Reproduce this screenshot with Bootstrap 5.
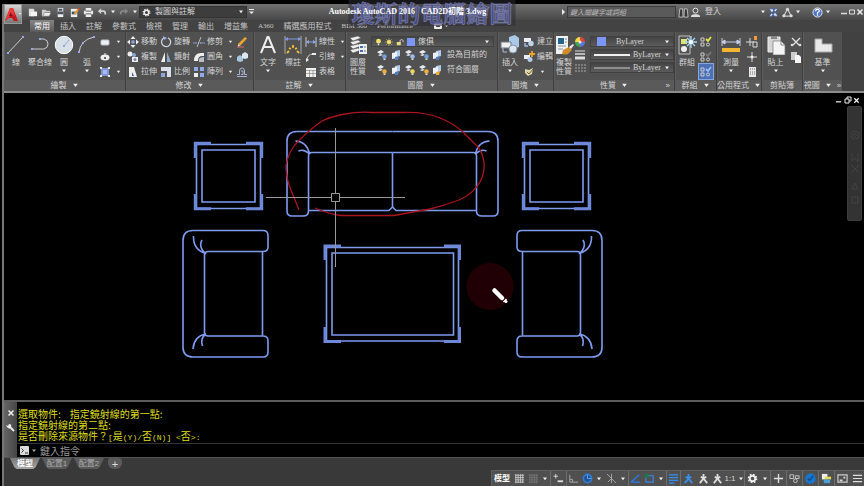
<!DOCTYPE html>
<html lang="zh-Hant">
<head>
<meta charset="utf-8">
<meta name="viewport" content="width=device-width, initial-scale=1">
<title>Autodesk AutoCAD 2016</title>
<link href="https://cdn.jsdelivr.net/npm/bootstrap@5.3.0/dist/css/bootstrap.min.css" rel="stylesheet">
<style>
body{background:#000;color:#d4d4d4;font:8px/10px "Liberation Sans","Noto Sans CJK TC",sans-serif;min-height:100vh;overflow:hidden}
svg{display:block;flex:none}
button,select,input{font:inherit;color:inherit}
.tool{background:none;border:0;padding:0;color:inherit;display:flex;align-items:center;white-space:nowrap;line-height:10px}
.shell{border-left:2px solid #777;margin:4px 0 0 2px;flex:1}
.topbar{display:grid;grid-template-columns:18px 1fr;background:linear-gradient(#707070,#484848 16px,#434343 16px,#434343)}
.appkey{background:linear-gradient(#d6d6d6,#777);height:20px;justify-content:center;border:1px solid #999}
.titlerow{height:16px;padding-left:3px}
.qa{width:14px;height:14px;justify-content:center}
.qs{width:8px;height:14px;justify-content:center}
.login{width:76px}
.workspace{width:108px;height:12px;background:#3d3d3d;border:1px solid #333;padding:0 2px}
.pick{appearance:none;background:none;border:0;padding:0;outline:0;line-height:10px;height:10px;min-width:0}
.doc{font:bold 8px/16px "Liberation Serif","Noto Sans CJK TC",serif;color:#fff;white-space:pre;position:relative;z-index:2}
.find{width:109px;height:12px;background:#5a5a5a;border:1px solid #3c3c3c;color:#ccc;font-style:italic;padding:0 2px;font-size:7px;outline:0}
.find::placeholder{color:#bbb;opacity:1}
.tabs{height:12px;padding-left:7px}
.tabs a{padding:1px 5px;color:#c4c4c4;text-decoration:none;line-height:11px;height:12px}
.tabs a.on{background:linear-gradient(#858585,#5a5a5a);color:#fff;padding:1px 4px;margin:0 1px}
.tabs a.latin{font-size:7px}
.ribbon{display:grid;grid-template-columns:122fr 128fr 92fr 152fr 56fr 121fr 42fr 45fr 41fr 40fr 21fr;background:#515151;border-bottom:2px solid #8c8c8c}
.panel{border-right:1px solid #3f3f3f;box-shadow:inset 1px 0 #5d5d5d;min-width:0;display:flex;flex-direction:column}
.blank{background:#414141}
.tools{display:flex;height:48px;padding-top:2px}
.caption{height:11px;background:#5a5a5a;line-height:10px;display:flex;justify-content:center;align-items:center;gap:5px;position:relative}
.big{flex-direction:column;height:44px;width:24px;line-height:9px}
.big svg.pic{height:20px;width:20px;margin:1px 0 3px}
.big svg.dn{margin-top:2px}
.narrow{width:22px}.wide{width:28px}
.spaced{gap:2px}
.rows{display:flex;flex-direction:column}
.rows .tool{height:15px;gap:2px;padding-left:1px}
.rows .pic{width:12px;height:12px}
.rows .dn{margin-left:3px}
.stack{padding:2px 3px 0 1px}
.stack.props{display:flex;flex-direction:column;gap:2px;padding-left:4px}
.glyphs{gap:1px;padding-top:2px}
.combo{height:11px;background:linear-gradient(#444,#5b5b5b);border:1px solid #414141;display:flex;align-items:center;gap:3px;padding:0 3px}
.combo.roomy{gap:10px;padding-left:6px}
.latin{font-family:"Liberation Serif",serif}
.icons .tool{width:14px;height:15px;justify-content:center}
.icons .pic{width:12px;height:12px}
.held{background:#4b70b6;outline:1px solid #86a6df}
.i-blue{color:#71a0dc}.i-navy{color:#547cc0}.i-sky{color:#9bbaf0}.i-gold{color:#f1af38}.i-sun{color:#f3d55b}.i-lime{color:#e4e44c}.i-dim{color:#777}.i-pale{color:#ddd}.i-on{color:#398eee}
.drawing{background:#000;flex:1 1 0;min-height:0;position:relative}
.drawing>svg{width:100%;height:100%}
.mdi{position:absolute;top:2px;right:3px}
.mdi .tool{width:9px;height:10px;justify-content:center}
.nav3d{position:absolute;top:13px;right:2px;width:15px;height:115px;background:#333;border:1px solid #3c3c3c;border-radius:2px}
.cmd{border-top:2px solid #5d5d5d;border-bottom:1px solid #555;background:#000}
.grip{width:13px;background:linear-gradient(90deg,#666,#444);padding-top:7px;gap:6px}
.log{font:10px/11px "Noto Sans CJK TC",sans-serif;color:#dede1c;padding:6px 0 0 1px;height:41px;white-space:pre}
.log kbd{font:8px/11px "Liberation Mono",monospace;background:none;color:inherit;padding:0}
.ask{border-top:1px solid #333;height:14px;padding-left:3px;gap:3px}
.ask input{background:none;border:0;padding:0;outline:0;font:10px/12px "Noto Sans CJK TC",sans-serif;color:#999}
.ask input::placeholder{color:#999;opacity:1}
.foot{background:#393939}
.sheets{padding-left:6px;height:12px;gap:2px}
.sheets .tool{height:11px;width:30px;justify-content:center;background:#5a5a5a;color:#aaa;clip-path:polygon(0 0,100% 0,86% 82%,78% 100%,22% 100%,14% 82%)}
.sheets .tool.on{background:linear-gradient(#777,#a5a5a5);color:#fff;font-weight:bold}
.sheets .tool.more{width:14px;clip-path:none;border-radius:3px 3px 6px 6px;margin-left:2px;font-size:11px;color:#ddd}
.status{background:#505050;border:1px solid #606060;border-width:1px 0 0 1px;height:16px}
.status .tool{width:14px;height:15px;justify-content:center}
.status .cell{width:16px}.status .drop{width:10px}.status .words{width:20px;gap:2px}
.status .sep{border-left:1px solid #6c6c6c}
.status .pic{width:11px;height:11px}
.banner{position:absolute;left:50%;top:0;height:26px;transform:translateX(-50%);background:#2c2c3488;padding:0 3px;font:bold 23px/25px "Noto Serif CJK TC","Noto Sans CJK TC",serif;color:#4d55a8aa;-webkit-text-stroke:1px #a2a6d877;white-space:nowrap;pointer-events:none}
</style>
<script src="https://cdn.jsdelivr.net/npm/bootstrap@5.3.0/dist/js/bootstrap.bundle.min.js"></script>
</head>
<body class="d-flex flex-column m-0">
<svg width="0" height="0" class="position-absolute" aria-hidden="true"><defs>
<symbol id="dn" viewBox="0 0 6 4"><path d="M1 0.5h4L3 3.2z" fill="#eee"/></symbol>
<symbol id="new" viewBox="0 0 12 12"><path d="M2 2h5l1 1v7H2z" fill="#ddd"/><path d="M4 5h7v5H4z" fill="#f4f4f4"/></symbol>
<symbol id="open" viewBox="0 0 12 12"><path d="M1 3h4l1 1h4v2H5L3 10H1z" fill="#ccc"/><path d="M4 6h7l-2 4H2z" fill="#eee" stroke="#555" stroke-width=".5"/></symbol>
<symbol id="save" viewBox="0 0 12 12"><path d="M3 1h6v10H3z" fill="#eee"/><path d="M4 2h4v2H4zM3 5h6v3H3z" fill="#46525e"/></symbol>
<symbol id="saveas" viewBox="0 0 12 12"><path d="M2 2h7v9H2z" fill="#eee"/><path d="M3 5h5v3H3z" fill="#37506d"/><path d="M5 7l5-6 1.500 1.200L7 8z" fill="#ec9b28"/><path d="M9 2l1-1 1.500 1-1 1z" fill="#d33"/></symbol>
<symbol id="print" viewBox="0 0 12 12"><path d="M3 1h6v3H3zM1 4h10v4H1zM3 7h6v4H3z" fill="#eee"/><path d="M3 4.500h6M3 7.500h6" stroke="#555"/></symbol>
<symbol id="undo" viewBox="0 0 12 12"><path d="M3 5h5q2 0 2 4" fill="none" stroke="currentColor" stroke-width="2"/><path d="M1 5l4-3.500v7z" fill="currentColor"/></symbol>
<symbol id="redo" viewBox="0 0 12 12"><path d="M9 5H4q-2 0-2 4" fill="none" stroke="#888" stroke-width="2"/><path d="M11 5L7 1.500v7z" fill="#888"/></symbol>
<symbol id="gear" viewBox="0 0 12 12"><circle cx="6" cy="6" r="3" fill="none" stroke="#eee" stroke-width="2"/><circle cx="6" cy="6" r="4.500" fill="none" stroke="#eee" stroke-width="1.500" stroke-dasharray="1.800 1.734"/></symbol>
<symbol id="line" viewBox="0 0 20 20"><path d="M2 18L17 2" stroke="#ccc"/><path d="M1 17h2v2H1zM16 1h2v2h-2z" fill="#9aa7ef"/></symbol>
<symbol id="pline" viewBox="0 0 20 20"><path d="M2 14h12q4-1 4-5t-4-5h-4" fill="none" stroke="#ccc"/><path d="M1 13h2v2H1zM9 3h2v2H9z" fill="#9aa7ef"/></symbol>
<symbol id="circ" viewBox="0 0 20 20"><circle cx="10" cy="10" r="8.700" fill="#d7dfe7" stroke="#fff"/><path d="M10 11l5-6" stroke="#91a7d9"/><path d="M9 10h2v2H9z" fill="#91a7d9"/></symbol>
<symbol id="arc" viewBox="0 0 20 20"><path d="M2 18Q3 5 17 2" fill="none" stroke="#ccc"/><path d="M1 16h2v2H1zM5 7h2v2H5zM16 1h2v2h-2z" fill="#9aa7ef"/></symbol>
<symbol id="rect" viewBox="0 0 12 12"><rect x="2" y="4" width="8" height="5" rx="1" fill="#f0f0f0" stroke="#bac6d8"/></symbol>
<symbol id="ell" viewBox="0 0 12 12"><ellipse cx="6" cy="6.500" rx="4.500" ry="3" fill="#eee"/><path d="M6 6V2" stroke="#eee"/><path d="M5 6h2v2H5z" fill="#59657a"/></symbol>
<symbol id="hatch" viewBox="0 0 12 12"><rect x="2" y="2" width="8" height="8" fill="#8097d7"/><path d="M4 4h4v4H4z" fill="#a9bbee"/><path d="M1 1h2v2H1zM9 1h2v2H9zM1 9h2v2H1zM9 9h2v2H9z" fill="#eee"/></symbol>
<symbol id="move" viewBox="0 0 12 12"><path d="M6 0l2.500 3h-5zM6 12l2.500-3h-5zM0 6l3-2.500v5zM12 6L9 3.500v5z" fill="#eee"/><path d="M4.500 4.500h3v3h-3z" fill="#94abe0"/></symbol>
<symbol id="copy" viewBox="0 0 12 12"><circle cx="3" cy="3" r="2.500" fill="#eee"/><circle cx="7" cy="4" r="2" fill="#8ba6df"/><path d="M5 6h6v5H5z" fill="#eee"/><circle cx="8" cy="8.500" r="1.500" fill="#78a"/></symbol>
<symbol id="stretch" viewBox="0 0 12 12"><path d="M2 1h5l3 10H2z" fill="#eee"/><path d="M5 6l2 4H5z" fill="#345ba8"/></symbol>
<symbol id="rot" viewBox="0 0 12 12"><path d="M8 1.800A4.600 4.600 0 1 1 4 1.900" fill="none" stroke="#cdd4df" stroke-width="1.300"/><path d="M3 0l4 2-3 2z" fill="#9eb2e4"/></symbol>
<symbol id="mirror" viewBox="0 0 12 12"><path d="M5 1v10H1z" fill="#eee"/><path d="M7 1v10h4z" fill="#8daaca"/></symbol>
<symbol id="scale" viewBox="0 0 12 12"><path d="M1 1h10v10H7V5H1z" fill="#d9e0eb"/><path d="M1 7h4v4H1z" fill="#90a6da"/></symbol>
<symbol id="trim" viewBox="0 0 12 12"><path d="M0 7h4M8 7h4" stroke="#889ddd"/><path d="M4 11L8 1" stroke="#bbb"/><path d="M5 7h3" stroke="#ccc" stroke-dasharray="1 1"/></symbol>
<symbol id="fillet" viewBox="0 0 12 12"><path d="M1 10Q1 2 8 2h3v3H9Q5 5 5 10z" fill="#eee"/><path d="M6 11V8q1-2 5-2v5z" fill="#b7bec8"/></symbol>
<symbol id="array" viewBox="0 0 12 12"><path d="M1 1h4v4H1zM7 1h4v4H7zM7 7h4v4H7z" fill="#91abe6"/><path d="M1 7h4v4H1z" fill="#eee"/></symbol>
<symbol id="pencil" viewBox="0 0 12 12"><path d="M2 8l7-7 2 1.500L4 10z" fill="#e9a52f"/><path d="M2 8l2 2-2 .5z" fill="#eee"/><path d="M1 11h7" stroke="#d86a63"/></symbol>
<symbol id="cube" viewBox="0 0 12 12"><path d="M1 6l3-2 3 2v4l-3 1-3-1z" fill="#a8c5df"/><path d="M6 3l3-2 3 2v4L9 8 6 7z" fill="#dce8f4"/></symbol>
<symbol id="offset" viewBox="0 0 12 12"><path d="M1 10.500h10M1 8.500h2.500V5q0-3 2.500-3t2.500 3v3.500H11M5 8.500h2V5H5" fill="none" stroke="#a5b3d0"/></symbol>
<symbol id="text" viewBox="0 0 20 20"><path d="M3 18L9.500 2h1L17 18M5.500 12h9" fill="none" stroke="#eee" stroke-width="2"/></symbol>
<symbol id="dim" viewBox="0 0 20 20"><path d="M2 1v18M18 1v18" stroke="#aaa"/><path d="M2 4h16" stroke="#8298e0"/><path d="M2 4l3-2v4zM18 4l-3-2v4z" fill="#8298e0"/><path d="M4 18l2-2M6 13l2 1M10 10v3M14 13l-2 1M16 18l-2-2" stroke="#f4bd35" stroke-width="1.800"/></symbol>
<symbol id="linear" viewBox="0 0 12 12"><path d="M1 1v10M11 1v10" stroke="#c8c8c8"/><path d="M1 6h10" stroke="#8ca3e6"/><path d="M1 6l3-2v4zM11 6L8 4v4z" fill="#8ca3e6"/></symbol>
<symbol id="leader" viewBox="0 0 12 12"><path d="M2 10Q2 3 8 3" fill="none" stroke="#ccc"/><path d="M1 11V7l3 2zM7 2h4v2H7z" fill="#eee"/></symbol>
<symbol id="table" viewBox="0 0 12 12"><path d="M1 2h10v9H1z" fill="#f0f0f0"/><path d="M1 4.500h10M1 7.500h10M4.500 4v7M8 4v7" stroke="#777" stroke-width=".6"/></symbol>
<symbol id="layers" viewBox="0 0 20 20"><path d="M2 3l8-2 3 2-8 3zM2 7l8-2 3 2-8 3zM2 11l8-2 3 2-8 3zM2 15l8-2 3 2-8 3z" fill="#eee" stroke="#555" stroke-width=".5"/><path d="M11 9h8v10h-8z" fill="#eee"/><path d="M12 11h3v2h-3zM12 15h3v2h-3z" fill="#436ebd"/><path d="M16 12h2M16 16h2" stroke="#777"/></symbol>
<symbol id="lay" viewBox="0 0 12 12"><path d="M1 3l4-2 3 2-4 2zM2 6l3-1 2 1-3 1z" fill="#e7ebf2"/><circle cx="8.500" cy="7.500" r="2.200" fill="currentColor"/><path d="M7.500 9.500h2v1.500h-2z" fill="#ddd"/></symbol>
<symbol id="lay2" viewBox="0 0 12 12"><path d="M5 2l5-1v6l-5 2z" fill="#b3cceb"/><path d="M2 4l5-1v6l-5 1z" fill="#eef2f6"/><path d="M5 8l4-1-1 4H5z" fill="currentColor"/></symbol>
<symbol id="bulb" viewBox="0 0 8 10"><circle cx="4" cy="4" r="3" fill="#f3e36d"/><path d="M3 7h2v2H3z" fill="#ddd"/></symbol>
<symbol id="sun" viewBox="0 0 10 10"><circle cx="5" cy="5" r="2.500" fill="#f7e36c"/><path d="M5 0v10M0 5h10M1.500 1.500l7 7M8.500 1.500l-7 7" stroke="#f7e36c" stroke-width=".6"/></symbol>
<symbol id="lock" viewBox="0 0 10 10"><path d="M1 5h5v4H1z" fill="#e6dc82"/><path d="M5 5V3q2-2 4 0v2" fill="none" stroke="#ddd"/></symbol>
<symbol id="insert" viewBox="0 0 20 20"><path d="M9 2l6-2 4 3v9l-5 2-5-3z" fill="#a8c9e8"/><path d="M1 7h10v6H1z" fill="#eee" stroke="#6b7b8e"/><circle cx="13" cy="14" r="4" fill="#dce6ed" stroke="#8394a5"/><path d="M3 13v4h4" fill="none" stroke="#aabbe8"/></symbol>
<symbol id="block" viewBox="0 0 12 12"><path d="M1 2h7v4H1z" fill="#e9eef5"/><circle cx="8" cy="7.500" r="2.700" fill="#c2d3e8"/><path d="M2 7v3h3" fill="none" stroke="currentColor" stroke-width="1.500"/></symbol>
<symbol id="blocke" viewBox="0 0 12 12"><path d="M1 4h6v4H1z" fill="#e9eef5"/><circle cx="7" cy="8.500" r="2.500" fill="#b2cae5"/><path d="M9 0v6M6 3h6" stroke="#f3a125" stroke-width="1.800"/></symbol>
<symbol id="tag" viewBox="0 0 12 12"><path d="M2 3l4 1 4-2-1 6-4 2-3-3z" fill="#ded7ae"/><path d="M4 6l2 2 4-5" fill="none" stroke="#806627"/></symbol>
<symbol id="match" viewBox="0 0 20 20"><path d="M2 1h12v18H2z" fill="#f1f1f1"/><path d="M4 3h6v6H4z" fill="#25658f"/><path d="M11 4h2M11 7h2M4 11h8M4 14h5" stroke="#8798a5"/><path d="M9 15l6-3 3 3-4 4q-3 1-6 0z" fill="#cf8d2c"/><path d="M15 12l4-3 1 1-3 4z" fill="#eee"/></symbol>
<symbol id="wheel" viewBox="0 0 12 12"><path d="M6 6L1 6A5 5 0 0 1 6 1z" fill="#f3da40"/><path d="M6 6V1a5 5 0 0 1 5 5z" fill="#db493d"/><path d="M6 6h5a5 5 0 0 1-5 5z" fill="#5879df"/><path d="M6 6v5a5 5 0 0 1-5-5z" fill="#48a154"/><circle cx="6" cy="6" r="1.500" fill="#eee"/></symbol>
<symbol id="lw" viewBox="0 0 12 12"><path d="M1 2h10" stroke="#ddd"/><path d="M1 5h10" stroke="#ddd" stroke-width="1.500"/><path d="M1 9h10" stroke="#ddd" stroke-width="3"/></symbol>
<symbol id="lt" viewBox="0 0 12 12"><path d="M2 2v9M5 2v9M8 2v9M11 2v9" stroke="#aaa" stroke-dasharray="2 1"/></symbol>
<symbol id="group" viewBox="0 0 20 20"><path d="M2 1h11v18H2z" fill="none" stroke="#ddd" stroke-width=".8"/><path d="M4 4h6v5H4z" fill="#dbe477"/><circle cx="7" cy="14" r="3" fill="#eee"/><path d="M14 1v12M8 7h12M10 3l8 8M18 3l-8 8" stroke="#a5d5fa" stroke-width="1.300"/><circle cx="14" cy="7" r="2" fill="#fff"/></symbol>
<symbol id="grp" viewBox="0 0 12 12"><path d="M1 2h3v3H1zM1 7h3v3H1z" fill="none" stroke="#ccc"/><circle cx="8" cy="8.500" r="1.500" fill="none" stroke="#ccc"/><path d="M6 3l2 2 3-4" fill="none" stroke="currentColor" stroke-width="1.800"/></symbol>
<symbol id="measure" viewBox="0 0 20 20"><path d="M1 3v8M19 3v8" stroke="#ccc"/><path d="M1 7h18M1 7l3-2v4zM19 7l-3-2v4z" stroke="#c8d2f0" fill="#c8d2f0"/><path d="M1 13h18v4H1z" fill="#f4b530"/></symbol>
<symbol id="point" viewBox="0 0 12 12"><path d="M6 1v10M1 6h10" stroke="#ddd"/><circle cx="6" cy="6" r="1.500" fill="#eee"/></symbol>
<symbol id="qsel" viewBox="0 0 12 12"><path d="M4 2v8M0 6h8" stroke="#ddd"/><path d="M8 0h3v4H8z" fill="#f19b36"/><path d="M7 6h4v5H7z" fill="none" stroke="#ddd"/></symbol>
<symbol id="calc" viewBox="0 0 12 12"><path d="M3 1h7v10H3z" fill="#e7e7e7"/><path d="M4 3h5M4 6h5M4 8h5" stroke="#707070" stroke-dasharray="1 1"/></symbol>
<symbol id="paste" viewBox="0 0 20 20"><path d="M2 2h12v15H2z" fill="#d5d5d5" stroke="#eee"/><path d="M5 1h6v3H5z" fill="#888"/><path d="M7 6h8l4 4v10H7z" fill="#f5f5f5" stroke="#777" stroke-width=".7"/><path d="M15 6v4h4" fill="none" stroke="#888"/></symbol>
<symbol id="cut" viewBox="0 0 12 12"><path d="M2 2l7 7M10 2L3 9" stroke="#e2e2e2" stroke-width="1.300"/><circle cx="2" cy="9" r="1.300" fill="#ddd"/><circle cx="10" cy="9" r="1.300" fill="#ddd"/></symbol>
<symbol id="pages" viewBox="0 0 12 12"><path d="M1 1h6v8H1z" fill="#ccc"/><path d="M5 4h4l2 2v6H5z" fill="#f6f6f6"/></symbol>
<symbol id="base" viewBox="0 0 20 20"><path d="M2 4h7v5h10v8H2z" fill="#e9e9e9" stroke="#aaa"/></symbol>
<symbol id="find" viewBox="0 0 12 12"><path d="M2 2h3l.5 9H1zM7 2h3l1 9H6.500z" fill="#383838" stroke="#ddd" stroke-width=".8"/></symbol>
<symbol id="user" viewBox="0 0 12 12"><circle cx="6" cy="4" r="2.700" fill="#555" stroke="#eee"/><path d="M1 11q0-3 4-3h2q4 0 4 3z" fill="#ddd"/></symbol>
<symbol id="ex" viewBox="0 0 12 12"><path d="M1 2h4l6 8H7zM11 2H8L1 10h3z" fill="#dfe7fb" stroke="#34519b" stroke-width=".8"/></symbol>
<symbol id="a360" viewBox="0 0 12 12"><path d="M6 2l4 8H2z" fill="none" stroke="#ccc" stroke-width="1.300"/><circle cx="6" cy="2.500" r="1.700" fill="#ddd"/><circle cx="2" cy="9.500" r="1.700" fill="#ddd"/><circle cx="10" cy="9.500" r="1.700" fill="#ddd"/></symbol>
<symbol id="min" viewBox="0 0 8 8"><path d="M1 5.500h6" stroke="#ddd" stroke-width="1.500"/></symbol>
<symbol id="max" viewBox="0 0 8 8"><path d="M1.500 2h5v4h-5z" fill="none" stroke="#ddd"/></symbol>
<symbol id="x" viewBox="0 0 8 8"><path d="M1.500 1.500l5 5M6.500 1.500l-5 5" stroke="#eee" stroke-width="1.500"/></symbol>
<symbol id="man" viewBox="0 0 12 12"><path d="M6 1v5L2 11M6 6l4 5M3 4l3 2 3-2" fill="none" stroke="currentColor" stroke-width="2"/></symbol>
<symbol id="grid" viewBox="0 0 12 12"><path d="M2 1v10M4.500 1v10M7 1v10M9.500 1v10M1 2.500h10M1 5h10M1 7.500h10M1 10h10" stroke="currentColor" stroke-width=".8"/></symbol>
</defs></svg>

<div class="shell d-flex flex-column">
<header class="topbar">
<button class="tool appkey" aria-label="應用程式功能表"><svg width="13" height="15" viewBox="0 0 13 15"><path d="M5 1h3l5 13H9L7 11H4l-4 3z" fill="#c51920"/><path d="M5 1h3l2 8-3-2-7 7z" fill="#ec3a39"/><path d="M6 5l1 4H4z" fill="#801018"/></svg><svg width="4" height="4"><use href="#dn"/></svg></button>
<div>
<div class="titlerow d-flex align-items-center">
<button class="tool qa" aria-label="新建"><svg width="11" height="11"><use href="#new"/></svg></button>
<button class="tool qa" aria-label="開啟"><svg width="11" height="11"><use href="#open"/></svg></button>
<button class="tool qa" aria-label="儲存"><svg width="11" height="11"><use href="#save"/></svg></button>
<button class="tool qa" aria-label="另存"><svg width="11" height="11"><use href="#saveas"/></svg></button>
<button class="tool qa" aria-label="出圖"><svg width="11" height="11"><use href="#print"/></svg></button>
<button class="tool qa" aria-label="退回"><svg width="10" height="10"><use href="#undo"/></svg></button>
<button class="tool qs" aria-label="退回清單"><svg width="6" height="4"><use href="#dn"/></svg></button>
<button class="tool qa" aria-label="重做"><svg width="10" height="10"><use href="#redo"/></svg></button>
<button class="tool qs" aria-label="重做清單"><svg width="6" height="4"><use href="#dn"/></svg></button>
<div class="workspace d-flex align-items-center gap-1"><svg width="9" height="9"><use href="#gear"/></svg><select class="pick flex-grow-1" aria-label="工作區"><option>製圖與註解</option></select><svg width="6" height="4"><use href="#dn"/></svg></div>
<button class="tool qs" aria-label="自訂"><svg width="7" height="8" viewBox="0 0 7 8"><path d="M1 1.500h5" stroke="#eee"/><path d="M1 3.500h5L3.500 6z" fill="#eee"/></svg></button>
<div class="doc flex-fill text-center">Autodesk AutoCAD 2016   CAD2D初階 3.dwg</div>
<svg width="7" height="8" viewBox="0 0 7 8"><path d="M2 1l3 3-3 3z" fill="#eee"/></svg>
<input class="find" aria-label="搜尋" placeholder="鍵入關鍵字或詞組">
<button class="tool qa" aria-label="搜尋"><svg width="11" height="11"><use href="#find"/></svg></button>
<button class="tool login gap-1"><svg width="11" height="11"><use href="#user"/></svg>登入<svg class="ms-auto" width="6" height="4"><use href="#dn"/></svg></button>
<button class="tool qa" aria-label="Exchange"><svg width="11" height="11"><use href="#ex"/></svg></button>
<button class="tool qa" aria-label="保持連接"><svg width="11" height="11"><use href="#a360"/></svg></button>
<button class="tool qs me-2" aria-label="連接選單"><svg width="6" height="4"><use href="#dn"/></svg></button>
<button class="tool qa" aria-label="說明"><svg width="11" height="11" viewBox="0 0 12 12"><circle cx="6" cy="6" r="5" fill="#5375c8" stroke="#eee"/><path d="M4 4.500q0-2 2-2t2 1.500-2 2v1.500M6 8v1.500" fill="none" stroke="#fff" stroke-width="1.300"/></svg></button>
<button class="tool qs me-2" aria-label="說明選單"><svg width="6" height="4"><use href="#dn"/></svg></button>
<button class="tool qs" aria-label="最小化"><svg width="8" height="8"><use href="#min"/></svg></button>
<button class="tool qs" aria-label="最大化"><svg width="8" height="8"><use href="#max"/></svg></button>
<button class="tool qs" aria-label="關閉"><svg width="8" height="8"><use href="#x"/></svg></button>
</div>
<nav class="tabs d-flex"><a href="#" class="on">常用</a><a href="#">插入</a><a href="#">註解</a><a href="#">參數式</a><a href="#">檢視</a><a href="#">管理</a><a href="#">輸出</a><a href="#">增益集</a><a href="#" class="latin">A360</a><a href="#">精選應用程式</a><a href="#" class="latin">BIM 360</a><a href="#" class="latin">Performance</a>
<button class="tool ms-3" aria-label="功能區顯示"><svg width="15" height="8" viewBox="0 0 15 8"><rect y="1" width="8" height="6" rx="1" fill="#eee"/><path d="M2 3.500h4v1.500H2z" fill="#444"/><path d="M11 3h3l-1.500 2z" fill="#eee"/></svg></button></nav>
</div>
</header>

<section class="ribbon" aria-label="功能區">
<div class="panel"><div class="tools">
<button class="tool big"><svg class="pic"><use href="#line"/></svg>線</button>
<button class="tool big"><svg class="pic"><use href="#pline"/></svg>聚合線</button>
<button class="tool big"><svg class="pic"><use href="#circ"/></svg>圓<svg class="dn" width="6" height="4"><use href="#dn"/></svg></button>
<button class="tool big narrow"><svg class="pic"><use href="#arc"/></svg>弧<svg class="dn" width="6" height="4"><use href="#dn"/></svg></button>
<div class="rows"><button class="tool" aria-label="矩形"><svg class="pic"><use href="#rect"/></svg><svg class="dn" width="5" height="4"><use href="#dn"/></svg></button><button class="tool" aria-label="橢圓"><svg class="pic"><use href="#ell"/></svg><svg class="dn" width="5" height="4"><use href="#dn"/></svg></button><button class="tool" aria-label="填充線"><svg class="pic"><use href="#hatch"/></svg><svg class="dn" width="5" height="4"><use href="#dn"/></svg></button></div>
</div><div class="caption">繪製<svg width="7" height="5"><use href="#dn"/></svg></div></div>

<div class="panel"><div class="tools spaced">
<div class="rows"><button class="tool"><svg class="pic"><use href="#move"/></svg>移動</button><button class="tool"><svg class="pic"><use href="#copy"/></svg>複製</button><button class="tool"><svg class="pic"><use href="#stretch"/></svg>拉伸</button></div>
<div class="rows"><button class="tool"><svg class="pic"><use href="#rot"/></svg>旋轉</button><button class="tool"><svg class="pic"><use href="#mirror"/></svg>鏡射</button><button class="tool"><svg class="pic"><use href="#scale"/></svg>比例</button></div>
<div class="rows"><button class="tool"><svg class="pic"><use href="#trim"/></svg>修剪<svg class="dn" width="5" height="4"><use href="#dn"/></svg></button><button class="tool"><svg class="pic"><use href="#fillet"/></svg>圓角<svg class="dn" width="5" height="4"><use href="#dn"/></svg></button><button class="tool"><svg class="pic"><use href="#array"/></svg>陣列<svg class="dn" width="5" height="4"><use href="#dn"/></svg></button></div>
<div class="rows"><button class="tool" aria-label="刪除"><svg class="pic"><use href="#pencil"/></svg></button><button class="tool" aria-label="分解"><svg class="pic"><use href="#cube"/></svg></button><button class="tool" aria-label="偏移"><svg class="pic"><use href="#offset"/></svg></button></div>
</div><div class="caption">修改<svg width="7" height="5"><use href="#dn"/></svg></div></div>

<div class="panel"><div class="tools">
<button class="tool big wide"><svg class="pic"><use href="#text"/></svg>文字<svg class="dn" width="6" height="4"><use href="#dn"/></svg></button>
<button class="tool big narrow"><svg class="pic"><use href="#dim"/></svg>標註</button>
<div class="rows"><button class="tool"><svg class="pic"><use href="#linear"/></svg>線性<svg class="dn" width="5" height="4"><use href="#dn"/></svg></button><button class="tool"><svg class="pic"><use href="#leader"/></svg>引線<svg class="dn" width="5" height="4"><use href="#dn"/></svg></button><button class="tool"><svg class="pic"><use href="#table"/></svg>表格</button></div>
</div><div class="caption">註解<svg width="7" height="5"><use href="#dn"/></svg></div></div>

<div class="panel"><div class="tools">
<button class="tool big"><svg class="pic"><use href="#layers"/></svg>圖層<br>性質</button>
<div class="flex-grow-1 stack">
<div class="combo"><svg width="7" height="8"><use href="#bulb"/></svg><svg width="8" height="8"><use href="#sun"/></svg><svg width="8" height="8"><use href="#lock"/></svg><svg width="8" height="8"><rect width="8" height="8" fill="#7b96f4"/></svg><select class="pick flex-grow-1" aria-label="圖層"><option>傢俱</option></select><svg width="6" height="4"><use href="#dn"/></svg></div>
<div class="icons d-flex ps-1"><button class="tool i-blue" aria-label="關閉圖層"><svg class="pic"><use href="#lay"/></svg></button><button class="tool i-navy" aria-label="隔離"><svg class="pic"><use href="#lay2"/></svg></button><button class="tool i-sky" aria-label="凍結"><svg class="pic"><use href="#lay"/></svg></button><button class="tool i-blue" aria-label="鎖護"><svg class="pic"><use href="#lay"/></svg></button><button class="tool w-auto gap-1"><svg class="pic i-navy"><use href="#lay2"/></svg>設為目前的</button></div>
<div class="icons d-flex ps-1"><button class="tool i-gold" aria-label="打開"><svg class="pic"><use href="#lay"/></svg></button><button class="tool i-navy" aria-label="取消隔離"><svg class="pic"><use href="#lay2"/></svg></button><button class="tool i-sun" aria-label="解凍"><svg class="pic"><use href="#lay"/></svg></button><button class="tool i-gold" aria-label="解鎖"><svg class="pic"><use href="#lay"/></svg></button><button class="tool w-auto gap-1"><svg class="pic i-gold"><use href="#lay2"/></svg>符合圖層</button></div>
</div></div><div class="caption">圖層<svg width="7" height="5"><use href="#dn"/></svg></div></div>

<div class="panel"><div class="tools">
<button class="tool big"><svg class="pic"><use href="#insert"/></svg>插入<svg class="dn" width="6" height="4"><use href="#dn"/></svg></button>
<div class="rows"><button class="tool"><svg class="pic i-sky"><use href="#block"/></svg>建立</button><button class="tool"><svg class="pic"><use href="#blocke"/></svg>編輯</button><button class="tool" aria-label="屬性"><svg class="pic"><use href="#tag"/></svg><svg class="dn" width="5" height="4"><use href="#dn"/></svg></button></div>
</div><div class="caption">圖塊<svg width="7" height="5"><use href="#dn"/></svg></div></div>

<div class="panel"><div class="tools">
<button class="tool big"><svg class="pic"><use href="#match"/></svg>複製<br>性質</button>
<div class="rows icons glyphs"><svg class="pic"><use href="#wheel"/></svg><svg class="pic"><use href="#lw"/></svg><svg class="pic"><use href="#lt"/></svg></div>
<div class="flex-grow-1 stack props latin">
<div class="combo roomy"><svg width="9" height="9"><rect width="9" height="9" fill="#7b96f4"/></svg><select class="pick flex-grow-1" aria-label="顏色"><option>ByLayer</option></select><svg width="6" height="4"><use href="#dn"/></svg></div>
<div class="combo"><svg width="36" height="4"><path d="M0 2h36" stroke="#eee" stroke-width="2"/></svg><select class="pick flex-grow-1" aria-label="線粗"><option>ByLayer</option></select><svg width="6" height="4"><use href="#dn"/></svg></div>
<div class="combo"><svg width="36" height="4"><path d="M0 2h36" stroke="#ccc"/></svg><select class="pick flex-grow-1" aria-label="線型"><option>ByLayer</option></select><svg width="6" height="4"><use href="#dn"/></svg></div>
</div></div><div class="caption">性質<svg width="7" height="5"><use href="#dn"/></svg><span class="position-absolute end-0 pe-1">»</span></div></div>

<div class="panel"><div class="tools">
<button class="tool big"><svg class="pic"><use href="#group"/></svg>群組</button>
<div class="rows icons"><button class="tool ps-0 i-lime" aria-label="解散群組"><svg class="pic"><use href="#grp"/></svg></button><button class="tool ps-0 i-dim" aria-label="編輯群組"><svg class="pic"><use href="#grp"/></svg></button><button class="tool held ps-0 i-sky" aria-label="群組選取"><svg class="pic"><use href="#grp"/></svg></button></div>
</div><div class="caption">群組<svg width="7" height="5"><use href="#dn"/></svg></div></div>

<div class="panel"><div class="tools">
<button class="tool big wide"><svg class="pic"><use href="#measure"/></svg>測量<svg class="dn" width="6" height="4"><use href="#dn"/></svg></button>
<div class="rows"><button class="tool" aria-label="快速選取"><svg class="pic"><use href="#qsel"/></svg></button><button class="tool" aria-label="點"><svg class="pic"><use href="#point"/></svg></button><button class="tool" aria-label="計算機"><svg class="pic"><use href="#calc"/></svg></button></div>
</div><div class="caption">公用程式<svg width="7" height="5"><use href="#dn"/></svg></div></div>

<div class="panel"><div class="tools">
<button class="tool big wide"><svg class="pic"><use href="#paste"/></svg>貼上<svg class="dn" width="6" height="4"><use href="#dn"/></svg></button>
<div class="rows"><button class="tool" aria-label="剪下"><svg class="pic"><use href="#cut"/></svg></button><button class="tool" aria-label="複製到剪貼簿"><svg class="pic"><use href="#pages"/></svg></button></div>
</div><div class="caption">剪貼簿</div></div>

<div class="panel"><div class="tools justify-content-center">
<button class="tool big"><svg class="pic"><use href="#base"/></svg>基準<svg class="dn" width="6" height="4"><use href="#dn"/></svg></button>
</div><div class="caption">視圖<svg width="7" height="5"><use href="#dn"/></svg>»</div></div>
<div class="blank"></div>
</section>

<main class="drawing">
<svg viewBox="4 93 860 307" role="img" aria-label="傢俱平面圖" fill="none" stroke="#7f9bf0" stroke-width="1.600">
<defs>
<g id="side"><path d="M196.500 144.500h64v64h-64zM202 150h53v52h-53z"/><path stroke-width="3" stroke="#6d88d8" d="M211 143.300H195.300V158M246 143.300H261.700V158M211 208.700H195.300V194M246 208.700H261.700V194"/></g>
<g id="chair"><path d="M193 230.500H263Q268 230.500 268 235.500V247Q268 251.500 263 251.500H208Q204.500 251.500 204.500 255V333Q204.500 336 208 336H263Q268 336 268 341V352Q268 357 263 357H193Q183 357 183 347V240.500Q183 230.500 193 230.500ZM262.500 251.500V336"/><path d="M193.500 236Q193 250 206 253.500M202 240Q198 247 206 254M193 349Q194 336 206 334M202.500 346Q200 338 206 334"/></g>
<g id="arm"><path d="M392.500 131.500H297Q287 131.500 287 141V211Q287 216 292 216H303Q308.500 216 308.500 211V156Q308.500 152.500 312 152.500H392.500M308.500 210.500H389L392.500 207"/><path d="M295.500 141Q307 141.500 309.500 154M298.500 151Q304 148.500 309.500 154"/></g>
</defs>
<use href="#side"/><use href="#side" x="328"/>
<use href="#chair"/><g transform="matrix(-1 0 0 1 785 0)"><use href="#chair"/><use href="#arm"/></g><use href="#arm"/>
<path d="M392.500 152.500V207"/>
<path d="M326.500 247.500h132v93.500h-132zM332 253h121.500v82h-121.500z"/>
<path d="M341 246H325V260M444 246H459.500V260M341 341.500H325V327M444 341.500H459.500V327" stroke-width="3" stroke="#6d88d8"/>
<path d="M299 210L291 190Q286 178 286 166Q287 156 294 146Q306 132 322 121Q330 117 345 114Q358 111.500 372 112.500H405Q425 112 440 118Q453 123 463 132L478 147Q483 154 484 162Q485 173 480 182Q473 194 459 200Q446 205 430 209L394 215.500H340Q326 213 315 208" stroke="#a9141c" stroke-width="1.300"/>
<path d="M266 197.500H331M340 197.500H405M335.500 128V193M335.500 202V267M331.500 193.500h8v8h-8z" stroke="#999" stroke-width="1"/>
<circle cx="490" cy="286.500" r="23.500" fill="#200004" stroke="none"/>
<path d="M494.500 290.500L502 298" stroke="#fff" stroke-width="4.500" stroke-linecap="round"/><path d="M503.500 302l3-3" stroke="#fff"/><circle cx="506" cy="301.500" r="1.500" fill="#fff" stroke="none"/>
</svg>
<div class="mdi d-flex"><button class="tool" aria-label="最小化圖面"><svg width="7" height="7"><use href="#min"/></svg></button><button class="tool" aria-label="還原圖面"><svg width="8" height="8" viewBox="0 0 8 8"><path d="M1 3h4v4H1zM3 3V1h4v4H5" fill="none" stroke="#eee"/></svg></button><button class="tool" aria-label="關閉圖面"><svg width="7" height="7"><use href="#x"/></svg></button></div>
<div class="nav3d d-flex align-items-center justify-content-center"><svg width="10" height="90" viewBox="0 0 10 90" fill="none" stroke="#424242"><circle cx="5" cy="16" r="4"/><circle cx="5" cy="16" r="1.500"/><path d="M2 34v8l3-3 3 4v-9M1 54l8-8M1 46l8 8M5 64l-3 6h6zM2 78h6v6H2z"/></svg></div>
</main>

<section class="cmd d-flex" aria-label="指令行">
<div class="grip d-flex flex-column align-items-center"><button class="tool" aria-label="關閉指令行"><svg width="8" height="8"><use href="#x"/></svg></button><button class="tool" aria-label="自訂指令行"><svg width="9" height="9" viewBox="0 0 9 9"><path d="M3 3l5 5" stroke="#eee" stroke-width="1.800"/><path d="M0 2l2 1 1-2Q6 1 5 4T1 4z" fill="#eee"/></svg></button></div>
<div class="flex-grow-1"><div class="log">選取物件:    指定鏡射線的第一點:
指定鏡射線的第二點:
是否刪除來源物件？<kbd>[</kbd>是<kbd>(Y)/</kbd>否<kbd>(N)] &lt;</kbd>否<kbd>&gt;:</kbd></div>
<div class="ask d-flex align-items-center"><svg width="17" height="9" viewBox="0 0 17 9"><rect width="9" height="9" rx="1" fill="#ddd"/><path d="M1.500 2.500l2 2-2 2M5 7h3" fill="none" stroke="#333"/><path d="M12 3.500h4L14 6z" fill="#aaa"/></svg><input class="flex-grow-1" aria-label="指令" placeholder="鍵入指令"></div></div>
</section>

<footer class="foot">
<div class="sheets d-flex"><button class="tool on">模型</button><button class="tool">配置1</button><button class="tool">配置2</button><button class="tool more" aria-label="新增配置">+</button></div>
<div class="d-flex justify-content-end"><div class="status d-flex">
<button class="tool words fw-bold text-white">模型</button>
<button class="tool i-pale" aria-label="格線"><svg class="pic"><use href="#grid"/></svg></button>
<button class="tool i-dim" aria-label="鎖點"><svg class="pic"><use href="#grid"/></svg></button>
<button class="tool drop" aria-label="鎖點設定"><svg width="6" height="4"><use href="#dn"/></svg></button>
<button class="tool cell sep" aria-label="動態輸入"><svg class="pic" viewBox="0 0 12 12"><path d="M3 1v5M.5 3.500h5" stroke="#ddd"/><path d="M5 8h6v2H5z" fill="#ddd"/></svg></button>
<button class="tool sep" aria-label="正交"><svg class="pic" viewBox="0 0 12 12"><path d="M2 2v8h9M2 7h3v3" fill="none" stroke="#aaa"/></svg></button>
<button class="tool" aria-label="極座標"><svg class="pic" viewBox="0 0 12 12"><circle cx="6" cy="6" r="4.500" fill="#295492" stroke="#2f7fdb" stroke-width="1.700"/><path d="M6 6h4M6 6V2" stroke="#56aaff"/></svg></button>
<button class="tool drop" aria-label="極座標設定"><svg width="6" height="4"><use href="#dn"/></svg></button>
<button class="tool" aria-label="等角"><svg class="pic" viewBox="0 0 12 12"><path d="M1 1l10 10M6 1v10M6 6L2 10" fill="none" stroke="#aaa"/></svg></button>
<button class="tool drop" aria-label="等角設定"><svg width="6" height="4"><use href="#dn"/></svg></button>
<button class="tool sep" aria-label="物件追蹤"><svg class="pic" viewBox="0 0 12 12"><path d="M1 10h10M1 10l9-8" stroke="#277bea" stroke-width="1.500"/></svg></button>
<button class="tool" aria-label="物件鎖點"><svg class="pic" viewBox="0 0 12 12"><path d="M2 3h8v7H2z" fill="none" stroke="#3688e8" stroke-width="1.300"/><path d="M1 1h4v4H1z" fill="#157a4a"/></svg></button>
<button class="tool drop" aria-label="物件鎖點設定"><svg width="6" height="4"><use href="#dn"/></svg></button>
<button class="tool sep" aria-label="線粗顯示"><svg class="pic" viewBox="0 0 12 12"><path d="M1 2h10M1 5h10M1 8h10M1 11h6" stroke="#348df5" stroke-width="1.500"/></svg></button>
<button class="tool cell sep i-on" aria-label="註解可見性"><svg class="pic"><use href="#man"/></svg></button>
<button class="tool i-pale" aria-label="自動比例"><svg class="pic"><use href="#man"/></svg></button>
<button class="tool i-pale" aria-label="註解比例"><svg class="pic"><use href="#man"/></svg></button>
<button class="tool words">1:1<svg width="6" height="4"><use href="#dn"/></svg></button>
<button class="tool cell sep" aria-label="工作區切換"><svg class="pic"><use href="#gear"/></svg></button>
<button class="tool drop" aria-label="工作區清單"><svg width="6" height="4"><use href="#dn"/></svg></button>
<button class="tool cell sep" aria-label="監視器"><svg class="pic" viewBox="0 0 12 12"><path d="M6 1v10M1 6h10" stroke="#ddd" stroke-width="1.500"/></svg></button>
<button class="tool cell sep" aria-label="隔離物件"><svg class="pic" viewBox="0 0 12 12"><path d="M1 2h4v4H1zM7 3h4v3H7z" fill="none" stroke="#ccc"/><circle cx="7" cy="8.500" r="2" fill="none" stroke="#ccc"/></svg></button>
<button class="tool cell sep" aria-label="硬體加速"><svg class="pic" viewBox="0 0 12 12"><circle cx="6" cy="6" r="5.700" fill="#1775cb"/><path d="M3 6l2 2 4-5" fill="none" stroke="#124a83" stroke-width="1.500"/></svg></button>
<button class="tool cell sep" aria-label="效能"><svg class="pic" viewBox="0 0 12 12"><path d="M1 1h6v6H1z" fill="#eee"/><path d="M4 4h7v3H4z" fill="#e8d74b"/><path d="M3 7h7v4H3z" fill="#48a0dc"/></svg></button>
<button class="tool cell sep" aria-label="全螢幕"><svg class="pic" viewBox="0 0 12 12"><path d="M1 2h10v8H1z" fill="none" stroke="#ccc" stroke-width="1.300"/><path d="M3 7h3v2H3zM7 4h2v2H7z" fill="#ddd"/></svg></button>
<button class="tool" aria-label="自訂狀態列"><svg class="pic" viewBox="0 0 12 12"><path d="M1 2.500h10M1 6h10M1 9.500h10" stroke="#ddd" stroke-width="1.300"/></svg></button>
</div></div>
</footer>
</div>
<div class="banner">瓊斯的電腦繪圖</div>
</body>
</html>
